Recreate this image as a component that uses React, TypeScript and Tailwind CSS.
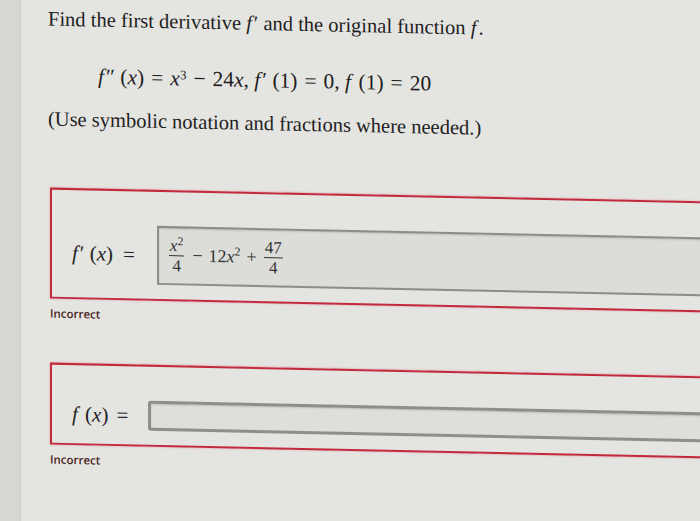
import React from "react";

const serif = "font-['Liberation_Serif','Times_New_Roman',serif]";

function F() {
  return <i className="mr-[2px]">f</i>;
}

function Op({ c }: { c: string }) {
  return <span className="mx-[7px]">{c}</span>;
}

function Frac({ num, den }: { num: React.ReactNode; den: React.ReactNode }) {
  return (
    <span className="mx-[3px] inline-flex flex-col items-center align-middle text-[17px] leading-[19px]">
      <span className="px-[1px]">{num}</span>
      <span className="h-px w-full bg-[#333]" />
      <span className="px-[1px]">{den}</span>
    </span>
  );
}

function AnswerBox({
  label,
  children,
  tall,
}: {
  label: React.ReactNode;
  children?: React.ReactNode;
  tall?: boolean;
}) {
  return (
    <div>
      <div className="-mr-10 ml-[2px] border-2 border-[#c22a3d] pb-[14px] pt-[34px] pl-[20px] shadow-[0_0_2px_rgba(230,80,110,0.6)]">
        <div className="flex items-center">
          <div className="text-[21px] leading-none text-[#222]">{label}</div>
          <div
            className={
              tall
                ? "ml-[22px] flex h-[59px] flex-1 items-center border-2 border-[#8c8c8a] bg-[#dcdcd9] pl-[7px] shadow-[inset_0_1px_2px_rgba(0,0,0,0.15)]"
                : "ml-[20px] h-[30px] flex-1 rounded-[3px] border-[3px] border-[#8e8e8c] bg-[#dededb] shadow-[inset_0_1px_2px_rgba(0,0,0,0.15)]"
            }
          >
            {children}
          </div>
        </div>
      </div>
      <div className="ml-[2px] mt-[7px] font-['Open_Sans',sans-serif] text-[11.5px] font-semibold leading-[16px] text-[#4a1f24]">
        Incorrect
      </div>
    </div>
  );
}

export default function App() {
  return (
    <div className={`flex h-[521px] w-[700px] overflow-hidden bg-[#e4e4e1] ${serif}`}>
      <div className="w-[21px] shrink-0 border-r border-[#cacac7] bg-[#d7d7d4]" />
      <div className="flex-1 origin-top-left skew-y-[1.2deg] pl-[27px] pt-[6px] text-[#1e1e1e]">
        <p className="text-[20.5px] leading-[24px]">
          Find the first derivative <F />′ and the original function <F />.
        </p>
        <p className="mt-[33px] pl-[50px] text-[21.5px] leading-[24px]">
          <F />″ (<i>x</i>)<Op c="=" /><i>x</i>
          <sup className="text-[13px]">3</sup>
          <Op c="−" />24<i>x</i>, <F />′ (1)<Op c="=" />0, <F /> (1)<Op c="=" />20
        </p>
        <p className="mt-[19px] text-[20.5px] leading-[24px]">
          (Use symbolic notation and fractions where needed.)
        </p>

        <div className="mt-[57px]">
          <AnswerBox
            tall
            label={
              <span>
                <F />′ (<i>x</i>)<span className="ml-[10px]">=</span>
              </span>
            }
          >
            <span className="flex items-center text-[18px] text-[#333]">
              <Frac
                num={
                  <span>
                    <i>x</i>
                    <sup className="text-[12px]">2</sup>
                  </span>
                }
                den="4"
              />
              <span className="ml-[5px]">
                −<span className="ml-[6px]">12</span>
                <i>x</i>
              </span>
              <sup className="text-[12px]">2</sup>
              <span className="ml-[6px] mr-[4px]">+</span>
              <Frac num="47" den="4" />
            </span>
          </AnswerBox>
        </div>

        <div className="mt-[41px]">
          <AnswerBox
            label={
              <span>
                <F /> (<i>x</i>)<span className="ml-[8px]">=</span>
              </span>
            }
          />
        </div>
      </div>
    </div>
  );
}
